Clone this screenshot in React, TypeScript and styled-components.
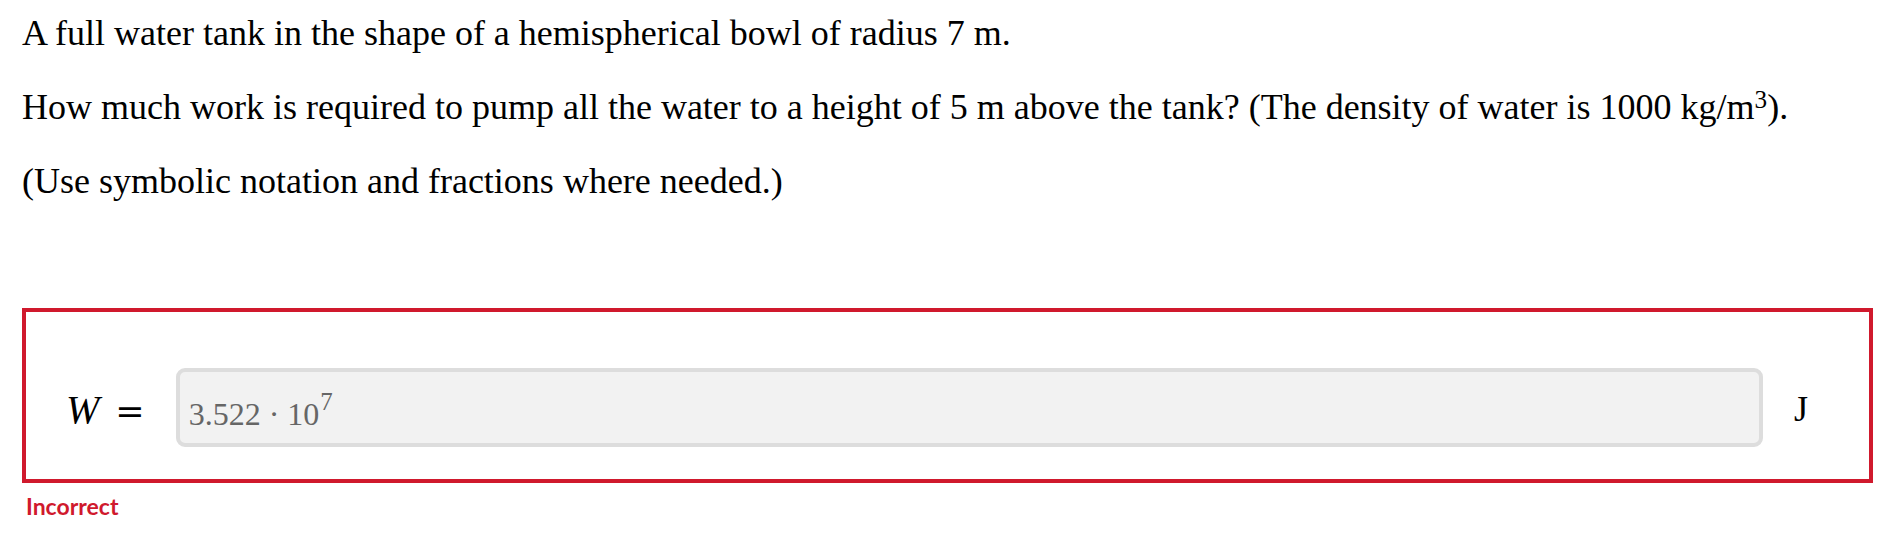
import React from 'react';
import styled, { createGlobalStyle } from 'styled-components';

const GlobalStyle = createGlobalStyle`
  html,
  body {
    margin: 0;
    padding: 0;
    background: #ffffff;
  }

  body {
    font-family: 'Liberation Serif', 'Times New Roman', serif;
    color: #000000;
  }
`;

const Page = styled.main`
  width: 1890px;
  box-sizing: border-box;
  padding: 6px 17px 0 22px;
`;

const Prompt = styled.p`
  margin: 0 0 20px;
  font-size: 36px;
  line-height: 54px;
`;

const Sup = styled.sup`
  font-size: 0.7em;
  line-height: 0;
  vertical-align: 0.42em;
`;

const AnswerBox = styled.section<{ $wrong?: boolean }>`
  margin-top: 100px;
  box-sizing: border-box;
  border: 4px solid ${({ $wrong }) => ($wrong ? '#d0192d' : '#cccccc')};
  padding: 56px 61px 32px 40px;

  display: grid;
  grid-template-columns: auto 1fr auto;
  column-gap: 31px;
  align-items: center;
`;

const Label = styled.div`
  display: flex;
  align-items: baseline;
  line-height: 1;
  padding-top: 4px;

  .var {
    font-style: italic;
    font-size: 40px;
  }

  .eq {
    font-family: 'DejaVu Serif', 'Liberation Serif', serif;
    font-size: 35px;
    margin-left: 16px;
  }
`;

const Field = styled.div`
  box-sizing: border-box;
  height: 79px;
  border: 4px solid #dddddd;
  border-radius: 9px;
  background: #f2f2f2;
  padding: 0 9px 10px;

  display: flex;
  align-items: flex-end;

  color: #666666;
  font-size: 32px;
  line-height: normal;
  white-space: pre;
`;

const FieldSup = styled.sup`
  font-size: 0.78em;
  line-height: 0;
  vertical-align: 0.62em;
  margin-left: 1px;
`;

const Unit = styled.span`
  font-size: 36px;
  line-height: 1;
  padding-top: 2px;
`;

const Feedback = styled.p<{ $wrong?: boolean }>`
  margin: 10px 0 0 4px;
  font-family: Lato, 'Open Sans', sans-serif;
  font-weight: 700;
  font-size: 23px;
  line-height: 1.2;
  color: ${({ $wrong }) => ($wrong ? '#d0192d' : '#2e7d32')};
`;

export default function App() {
  return (
    <>
      <GlobalStyle />
      <Page>
        <Prompt>A full water tank in the shape of a hemispherical bowl of radius 7 m.</Prompt>
        <Prompt>
          How much work is required to pump all the water to a height of 5 m above the tank? (The
          density of water is 1000 kg/m<Sup>3</Sup>).
        </Prompt>
        <Prompt>(Use symbolic notation and fractions where needed.)</Prompt>

        <AnswerBox $wrong>
          <Label>
            <span className="var">W</span>
            <span className="eq">=</span>
          </Label>
          <Field>
            <span>
              3.522 · 10<FieldSup>7</FieldSup>
            </span>
          </Field>
          <Unit>J</Unit>
        </AnswerBox>
        <Feedback $wrong>Incorrect</Feedback>
      </Page>
    </>
  );
}
